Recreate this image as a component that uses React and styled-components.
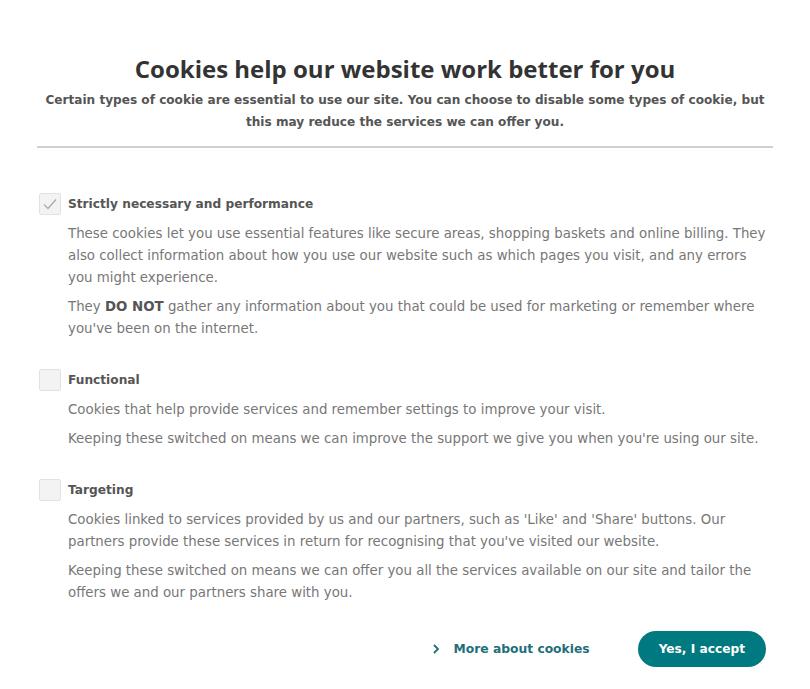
import React from 'react';
import styled, { createGlobalStyle } from 'styled-components';

const Global = createGlobalStyle`
  html, body { margin: 0; padding: 0; background: #fff; }
  body { font-family: "DejaVu Sans", "Open Sans", sans-serif; }
`;

const Modal = styled.div`
  width: 810px;
  box-sizing: border-box;
  padding: 53px 37px 0 37px;
`;

const Header = styled.header`
  text-align: center;
  padding-bottom: 13px;
  border-bottom: 2px solid #d0d0d0;
  h1 {
    margin: 0 0 4px;
    font-family: "Open Sans", sans-serif;
    font-size: 24px;
    font-weight: 700;
    color: #333;
    line-height: 32px;
  }
  p {
    margin: 0 auto;
    max-width: 736px;
    font-size: 12.1px;
    font-weight: 700;
    color: #555;
    line-height: 22px;
  }
`;

const Sections = styled.div`
  padding: 45px 0 0 2px;
  display: flex;
  flex-direction: column;
  gap: 23px;
`;

const Section = styled.section``;

const Head = styled.label`
  display: flex;
  align-items: center;
  gap: 7px;
  font-size: 12.2px;
  font-weight: 700;
  color: #555;
  height: 22px;
  margin-bottom: 8px;
`;

const Box = styled.span`
  width: 22px;
  height: 22px;
  box-sizing: border-box;
  border: 1px solid #e2e2e2;
  background: #f3f3f3;
  border-radius: 2px;
  display: flex;
  align-items: center;
  justify-content: center;
`;

const Text = styled.p`
  margin: 0 0 6.5px 29px;
  font-size: 13.35px;
  line-height: 22px;
  color: #777;
  b { color: #555; }
`;

const Footer = styled.div`
  display: flex;
  justify-content: flex-end;
  align-items: center;
  gap: 48px;
  margin-top: 21px;
  padding-right: 7px;
`;

const MoreLink = styled.a`
  display: flex;
  align-items: center;
  gap: 14px;
  color: #1f6f7a;
  font-size: 12.3px;
  font-weight: 700;
  text-decoration: none;
`;

const Accept = styled.button`
  height: 36px;
  padding: 0 21px;
  border: none;
  border-radius: 18px;
  background: #007a80;
  color: #fff;
  font-family: inherit;
  font-size: 12.2px;
  font-weight: 700;
`;

const Check = ({ checked }) => (
  <Box>
    {checked && (
      <svg width="16" height="16" viewBox="0 0 16 16">
        <path d="M2 8.5 L6 12.5 L14 3.5" fill="none" stroke="#aaa" strokeWidth="1.3" />
      </svg>
    )}
  </Box>
);

const Chevron = () => (
  <svg width="8" height="10" viewBox="0 0 8 10">
    <path d="M2 1 L6 5 L2 9" fill="none" stroke="#1f6f7a" strokeWidth="1.8" />
  </svg>
);

export default function App() {
  return (
    <>
      <Global />
      <Modal>
        <Header>
          <h1>Cookies help our website work better for you</h1>
          <p>
            Certain types of cookie are essential to use our site. You can choose to disable some types of cookie, but
            this may reduce the services we can offer you.
          </p>
        </Header>
        <Sections>
          <Section>
            <Head>
              <Check checked />
              Strictly necessary and performance
            </Head>
            <Text>
              These cookies let you use essential features like secure areas, shopping baskets and online billing. They
              also collect information about how you use our website such as which pages you visit, and any errors you
              might experience.
            </Text>
            <Text>
              They <b>DO NOT</b> gather any information about you that could be used for marketing or remember where
              you've been on the internet.
            </Text>
          </Section>
          <Section>
            <Head>
              <Check />
              Functional
            </Head>
            <Text>Cookies that help provide services and remember settings to improve your visit.</Text>
            <Text>Keeping these switched on means we can improve the support we give you when you're using our site.</Text>
          </Section>
          <Section>
            <Head>
              <Check />
              Targeting
            </Head>
            <Text>
              Cookies linked to services provided by us and our partners, such as 'Like' and 'Share' buttons. Our
              partners provide these services in return for recognising that you've visited our website.
            </Text>
            <Text>
              Keeping these switched on means we can offer you all the services available on our site and tailor the
              offers we and our partners share with you.
            </Text>
          </Section>
        </Sections>
        <Footer>
          <MoreLink href="#">
            <Chevron />
            More about cookies
          </MoreLink>
          <Accept>Yes, I accept</Accept>
        </Footer>
      </Modal>
    </>
  );
}
